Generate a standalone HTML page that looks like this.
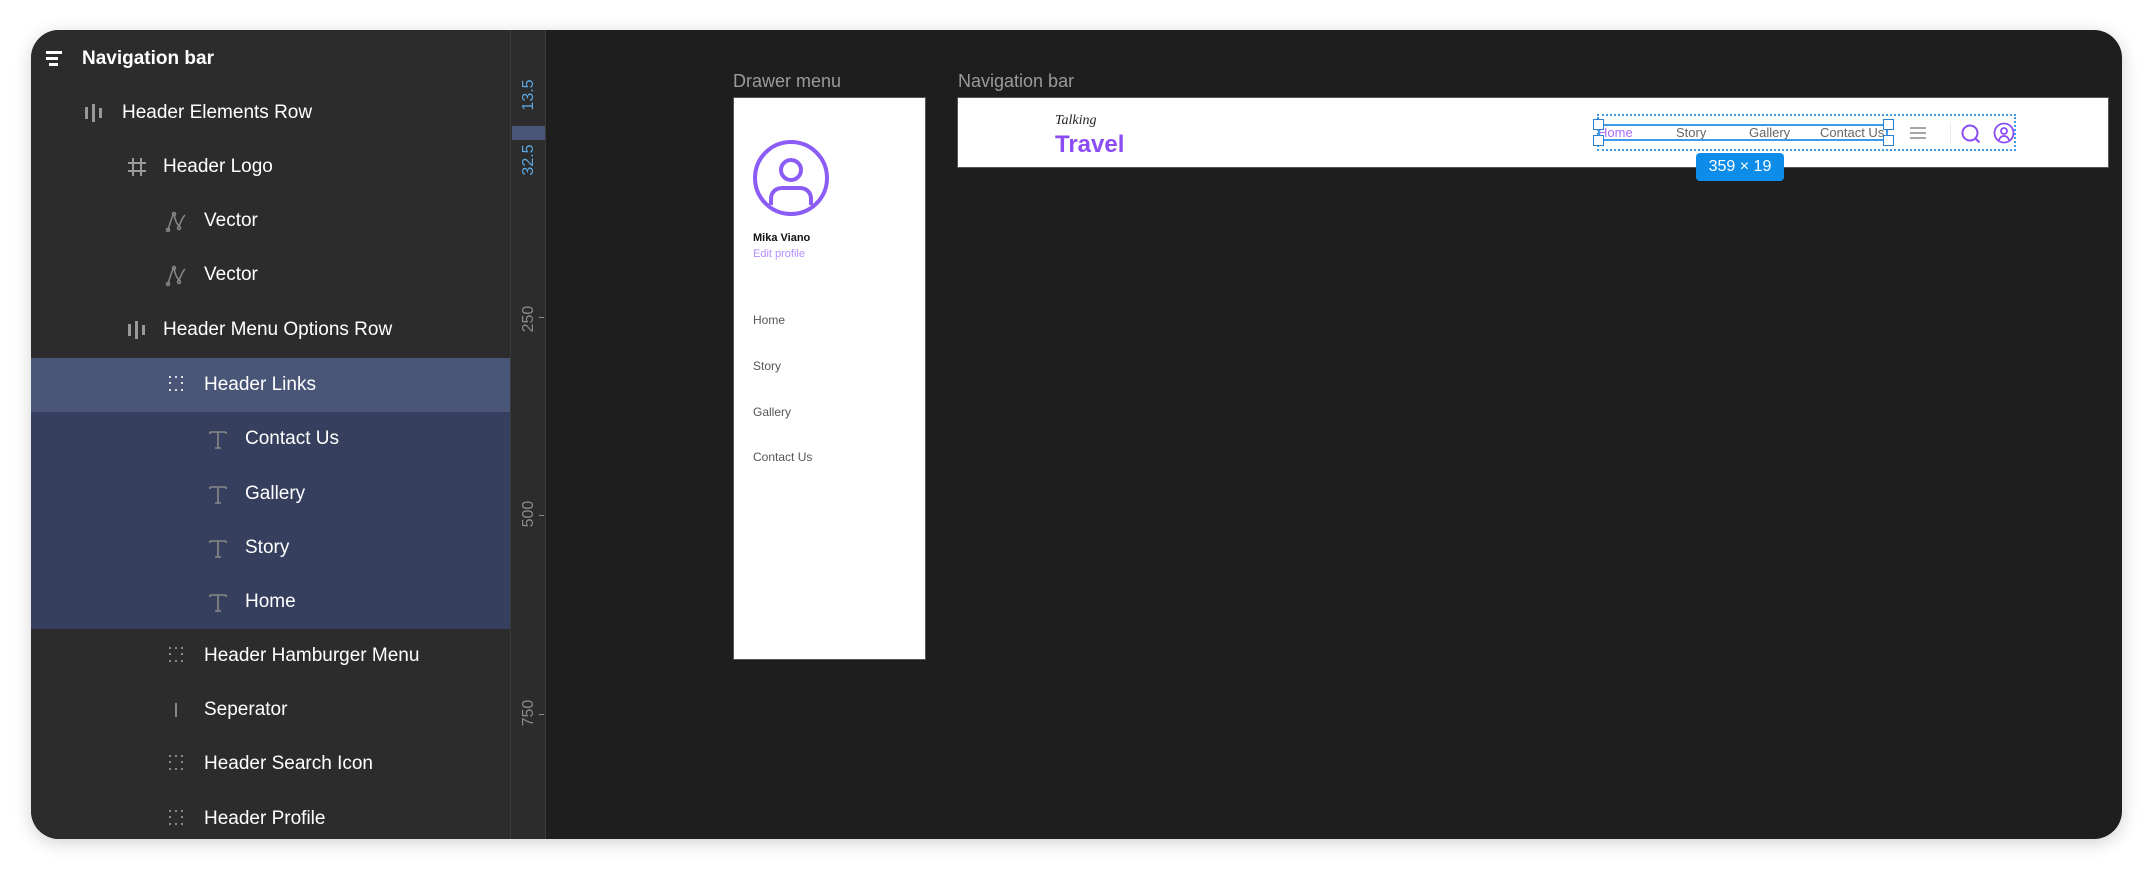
<!DOCTYPE html>
<html><head><meta charset="utf-8"><style>
*{margin:0;padding:0;box-sizing:border-box}
body{width:2152px;height:870px;background:#fff;position:relative;overflow:hidden;font-family:"Liberation Sans",sans-serif}
.frame{position:absolute;left:31px;top:30px;width:2091px;height:809px;border-radius:28px;overflow:hidden;background:#1e1e1e;box-shadow:0 4px 18px rgba(0,0,0,.18)}
.panel{position:absolute;left:0;top:0;width:479px;height:100%;background:#2c2c2c}
.ruler{position:absolute;left:479px;top:0;width:36px;height:100%;background:#2c2c2c;border-left:1px solid #3a3a3a;border-right:1px solid #3a3a3a}
.row{position:absolute;left:0;width:479px;height:54px;color:#fff;font-size:19px;line-height:54px;white-space:nowrap}
.row svg{position:absolute;top:17px}
.row span{position:absolute}
.abs{position:absolute}
.rl{position:absolute;transform:rotate(-90deg);font-size:16px;color:#8a8a8a;width:60px;text-align:center;left:-12px}
</style></head><body>
<div class="frame">
<div class="panel">
<div class="abs" style="left:0;top:328px;width:479px;height:54px;background:#4a5678"></div>
<div class="abs" style="left:0;top:382px;width:479px;height:217px;background:#36405e"></div>

<div class="row" style="top:2px;font-weight:bold"><svg style="left:14px" width="18" height="20"><rect x="1" y="2" width="16" height="3" fill="#fff"/><rect x="1" y="8" width="12" height="3" fill="#fff"/><rect x="4" y="14" width="9" height="3" fill="#fff"/></svg><span style="left:51px">Navigation bar</span></div>
<div class="row" style="top:56px"><svg style="left:53px" width="22" height="20"><rect x="1" y="4" width="3" height="12" fill="#999"/><rect x="8" y="1" width="3" height="18" fill="#999"/><rect x="15" y="5" width="3" height="10" fill="#999"/></svg><span style="left:91px">Header Elements Row</span></div>
<div class="row" style="top:110px"><svg style="left:96px" width="20" height="20" stroke="#999" stroke-width="2"><path d="M6 1v18M14 1v18M1 6h18M1 14h18"/></svg><span style="left:132px">Header Logo</span></div>
<div class="row" style="top:164px"><svg style="left:134px" width="22" height="22" fill="none" stroke="#888" stroke-width="1.5"><path d="M3 19C5 12 7 5 9 3M9 3c1 6 3 10 5 12M14 15c2-4 3-8 6-11"/><circle cx="9" cy="3" r="1.5"/><circle cx="3" cy="19" r="1.5"/><circle cx="14" cy="17" r="1.5"/></svg><span style="left:173px">Vector</span></div>
<div class="row" style="top:218px"><svg style="left:134px" width="22" height="22" fill="none" stroke="#888" stroke-width="1.5"><path d="M3 19C5 12 7 5 9 3M9 3c1 6 3 10 5 12M14 15c2-4 3-8 6-11"/><circle cx="9" cy="3" r="1.5"/><circle cx="3" cy="19" r="1.5"/><circle cx="14" cy="17" r="1.5"/></svg><span style="left:173px">Vector</span></div>
<div class="row" style="top:273px"><svg style="left:96px" width="22" height="20"><rect x="1" y="4" width="3" height="12" fill="#999"/><rect x="8" y="1" width="3" height="18" fill="#999"/><rect x="15" y="5" width="3" height="10" fill="#999"/></svg><span style="left:132px">Header Menu Options Row</span></div>
<div class="row" style="top:328px"><svg style="left:137px" width="20" height="20" fill="#ddd"><rect x="1" y="1" width="2" height="2"/><rect x="7" y="1" width="2" height="2"/><rect x="13" y="1" width="2" height="2"/><rect x="1" y="7" width="2" height="2"/><rect x="13" y="7" width="2" height="2"/><rect x="1" y="14" width="2" height="2"/><rect x="7" y="14" width="2" height="2"/><rect x="13" y="14" width="2" height="2"/></svg><span style="left:173px">Header Links</span></div>
<div class="row" style="top:382px"><svg style="left:177px" width="20" height="20" stroke="#888" stroke-width="1.6" fill="none"><path d="M2 3h16M10 3v16M7 19h6M2 3v2M18 3v2"/></svg><span style="left:214px">Contact Us</span></div>
<div class="row" style="top:437px"><svg style="left:177px" width="20" height="20" stroke="#888" stroke-width="1.6" fill="none"><path d="M2 3h16M10 3v16M7 19h6M2 3v2M18 3v2"/></svg><span style="left:214px">Gallery</span></div>
<div class="row" style="top:491px"><svg style="left:177px" width="20" height="20" stroke="#888" stroke-width="1.6" fill="none"><path d="M2 3h16M10 3v16M7 19h6M2 3v2M18 3v2"/></svg><span style="left:214px">Story</span></div>
<div class="row" style="top:545px"><svg style="left:177px" width="20" height="20" stroke="#888" stroke-width="1.6" fill="none"><path d="M2 3h16M10 3v16M7 19h6M2 3v2M18 3v2"/></svg><span style="left:214px">Home</span></div>
<div class="row" style="top:599px"><svg style="left:137px" width="20" height="20" fill="#888"><rect x="1" y="1" width="2" height="2"/><rect x="7" y="1" width="2" height="2"/><rect x="13" y="1" width="2" height="2"/><rect x="1" y="7" width="2" height="2"/><rect x="13" y="7" width="2" height="2"/><rect x="1" y="14" width="2" height="2"/><rect x="7" y="14" width="2" height="2"/><rect x="13" y="14" width="2" height="2"/></svg><span style="left:173px">Header Hamburger Menu</span></div>
<div class="row" style="top:653px"><svg style="left:137px" width="20" height="20"><rect x="7" y="3" width="2" height="14" fill="#888"/></svg><span style="left:173px">Seperator</span></div>
<div class="row" style="top:707px"><svg style="left:137px" width="20" height="20" fill="#888"><rect x="1" y="1" width="2" height="2"/><rect x="7" y="1" width="2" height="2"/><rect x="13" y="1" width="2" height="2"/><rect x="1" y="7" width="2" height="2"/><rect x="13" y="7" width="2" height="2"/><rect x="1" y="14" width="2" height="2"/><rect x="7" y="14" width="2" height="2"/><rect x="13" y="14" width="2" height="2"/></svg><span style="left:173px">Header Search Icon</span></div>
<div class="row" style="top:762px"><svg style="left:137px" width="20" height="20" fill="#888"><rect x="1" y="1" width="2" height="2"/><rect x="7" y="1" width="2" height="2"/><rect x="13" y="1" width="2" height="2"/><rect x="1" y="7" width="2" height="2"/><rect x="13" y="7" width="2" height="2"/><rect x="1" y="14" width="2" height="2"/><rect x="7" y="14" width="2" height="2"/><rect x="13" y="14" width="2" height="2"/></svg><span style="left:173px">Header Profile</span></div>
</div>

<div class="ruler">
<div class="abs" style="left:1px;top:96px;width:33px;height:14px;background:#4a5678"></div>
<div class="rl" style="top:56px;color:#5aa7e0">13.5</div>
<div class="rl" style="top:121px;color:#5aa7e0">32.5</div>
<div class="rl" style="top:280px">250</div><div class="abs" style="left:28px;top:287px;width:5px;height:1px;background:#888"></div>
<div class="rl" style="top:475px">500</div><div class="abs" style="left:28px;top:485px;width:5px;height:1px;background:#888"></div>
<div class="rl" style="top:674px">750</div><div class="abs" style="left:28px;top:684px;width:5px;height:1px;background:#888"></div>
</div>

<!-- Drawer -->
<div class="abs" style="left:702px;top:41px;color:#9a9a9a;font-size:18px">Drawer menu</div>
<div class="abs" style="left:702px;top:67px;width:193px;height:563px;background:#fff;border:1px solid #555">
<svg class="abs" style="left:18px;top:41px" width="78" height="78" fill="none" stroke="#8b5cf6" stroke-width="4"><circle cx="39" cy="39" r="36"/><circle cx="39" cy="31" r="10"/><path d="M19 66v-6c0-7 5-11 11-11h18c6 0 11 4 11 11v6"/></svg>
<div class="abs" style="left:19px;top:134px;font-size:11px;font-weight:bold;color:#111">Mika Viano</div>
<div class="abs" style="left:19px;top:150px;font-size:11px;color:#b48cff">Edit profile</div>
<div class="abs" style="left:19px;top:215px;font-size:12px;color:#555">Home</div>
<div class="abs" style="left:19px;top:261px;font-size:12px;color:#555">Story</div>
<div class="abs" style="left:19px;top:307px;font-size:12px;color:#555">Gallery</div>
<div class="abs" style="left:19px;top:352px;font-size:12px;color:#555">Contact Us</div>
</div>

<!-- Nav bar -->
<div class="abs" style="left:927px;top:41px;color:#9a9a9a;font-size:18px">Navigation bar</div>
<div class="abs" style="left:926px;top:67px;width:1152px;height:71px;background:#fff;border:1px solid #555">
<div class="abs" style="left:97px;top:15px;font-family:'Liberation Serif',serif;font-style:italic;font-size:14px;color:#222">Talking</div>
<div class="abs" style="left:97px;top:33px;font-size:24px;font-weight:bold;color:#8b4cf6">Travel</div>
<div class="abs" style="left:640px;top:27px;font-size:13px;color:#a66cff">Home</div>
<div class="abs" style="left:718px;top:27px;font-size:13px;color:#666">Story</div>
<div class="abs" style="left:791px;top:27px;font-size:13px;color:#666">Gallery</div>
<div class="abs" style="left:862px;top:27px;font-size:13px;color:#666">Contact Us</div>
<svg class="abs" style="left:951px;top:28px" width="18" height="14" stroke="#888" stroke-width="1.5"><path d="M1 2h16M1 7h16M1 12h16"/></svg>
<div class="abs" style="left:992px;top:24px;width:1px;height:22px;background:#eee"></div>
<svg class="abs" style="left:1002px;top:25px" width="22" height="22" fill="none" stroke="#8b4cf6" stroke-width="2"><circle cx="10" cy="10" r="7.5"/><path d="M15.5 15.5l4 4"/></svg>
<svg class="abs" style="left:1035px;top:24px" width="22" height="22" fill="none" stroke="#8b4cf6" stroke-width="1.8"><circle cx="11" cy="11" r="9.5"/><circle cx="11" cy="9" r="3"/><path d="M6 18c1-3 3-4 5-4s4 1 5 4"/></svg>
<div class="abs" style="left:639px;top:16px;width:419px;height:37px;border:2px dotted #3d9be9"></div>
<div class="abs" style="left:640px;top:26px;width:290px;height:17px;border:2px solid #3d9be9"></div>
<div class="abs" style="left:635px;top:21px;width:11px;height:11px;border:1.5px solid #2a7fd0;background:#fff"></div>
<div class="abs" style="left:635px;top:37px;width:11px;height:11px;border:1.5px solid #2a7fd0;background:#fff"></div>
<div class="abs" style="left:925px;top:21px;width:11px;height:11px;border:1.5px solid #2a7fd0;background:#fff"></div>
<div class="abs" style="left:925px;top:37px;width:11px;height:11px;border:1.5px solid #2a7fd0;background:#fff"></div>
</div>
<div class="abs" style="left:1665px;top:123px;width:88px;height:28px;background:#0d8ce9;border-radius:4px;color:#fff;font-size:16px;line-height:28px;text-align:center">359 × 19</div>
</div>
</body></html>
